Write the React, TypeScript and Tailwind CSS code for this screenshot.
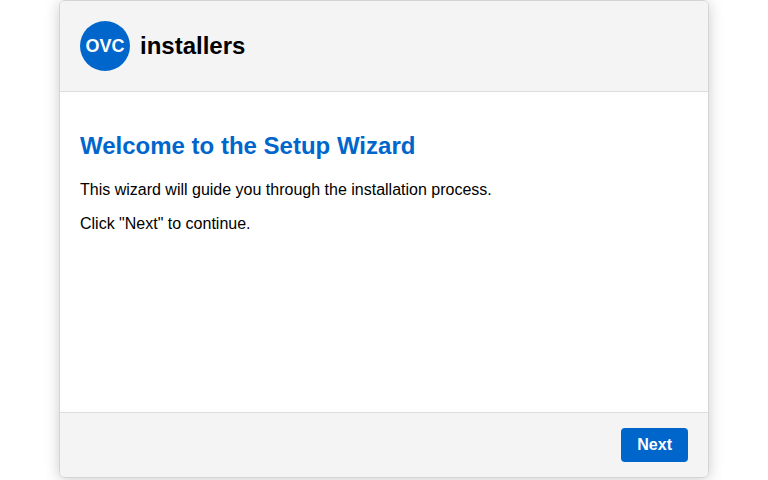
export default function App() {
  return (
    <div className="w-[768px] h-[480px] bg-white overflow-hidden font-['Liberation_Sans',Arial,sans-serif] text-black">
      <div className="w-[650px] h-[478px] mx-auto flex flex-col bg-white border border-[#d4d4d4] rounded-[6px] shadow-[0_2px_15px_rgba(0,0,0,0.2)] overflow-hidden">
        <header className="h-[91px] shrink-0 flex items-center gap-[10px] px-5 bg-[#f4f4f4] border-b border-[#dddddd]">
          <div className="w-[50px] h-[50px] rounded-full bg-[#0066cc] text-white flex items-center justify-center text-lg font-bold">OVC</div>
          <h1 className="text-2xl font-bold">installers</h1>
        </header>
        <main className="flex-1 px-5 pt-[20px]">
          <h2 className="text-2xl font-bold text-[#0066cc] mt-[20px] mb-[21px] leading-[28px]">Welcome to the Setup Wizard</h2>
          <p className="text-base leading-[18px] mb-4">This wizard will guide you through the installation process.</p>
          <p className="text-base leading-[18px]">Click "Next" to continue.</p>
        </main>
        <footer className="h-[65px] shrink-0 flex items-center justify-end px-5 bg-[#f4f4f4] border-t border-[#dddddd]">
          <button className="h-[34px] px-4 rounded-[4px] bg-[#0066cc] text-white text-base font-bold">Next</button>
        </footer>
      </div>
    </div>
  );
}
